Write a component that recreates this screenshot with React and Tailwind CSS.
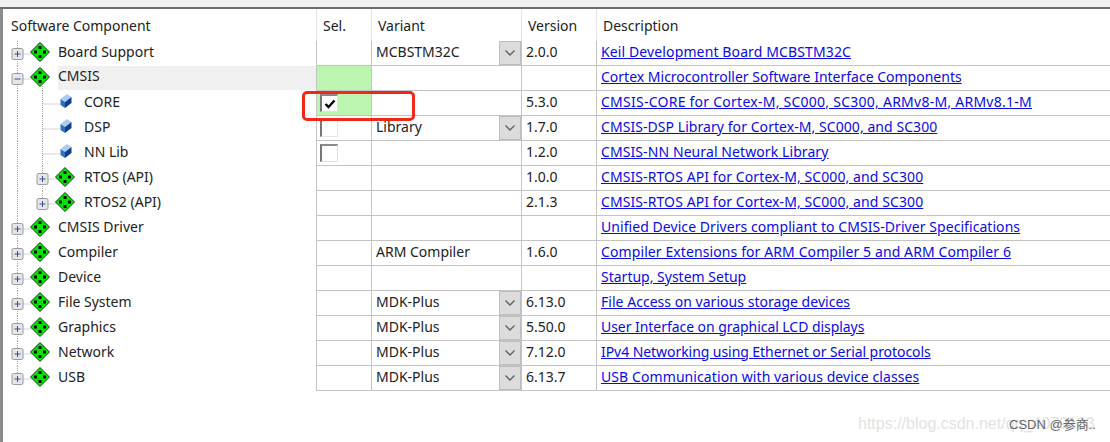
import React from 'react';

const rows = [
  { name: 'Board Support', level: 0, icon: 'pack', exp: '+', variant: 'MCBSTM32C', drop: true, version: '2.0.0', desc: 'Keil Development Board MCBSTM32C', fit: 'tracking-[0.12px]' },
  { name: 'CMSIS', level: 0, icon: 'pack', exp: '-', active: true, green: true, version: '', desc: 'Cortex Microcontroller Software Interface Components', fit: '' },
  { name: 'CORE', level: 1, icon: 'gem', green: true, check: 'on', version: '5.3.0', desc: 'CMSIS-CORE for Cortex-M, SC000, SC300, ARMv8-M, ARMv8.1-M', fit: 'tracking-[0.25px]' },
  { name: 'DSP', level: 1, icon: 'gem', check: 'faint', variant: 'Library', drop: true, version: '1.7.0', desc: 'CMSIS-DSP Library for Cortex-M, SC000, and SC300', fit: 'tracking-[0.06px]' },
  { name: 'NN Lib', level: 1, icon: 'gem', check: 'off', version: '1.2.0', desc: 'CMSIS-NN Neural Network Library', fit: 'tracking-[0.09px]' },
  { name: 'RTOS (API)', level: 1, icon: 'pack', exp: '+', version: '1.0.0', desc: 'CMSIS-RTOS API for Cortex-M, SC000, and SC300', fit: 'tracking-[0.09px]' },
  { name: 'RTOS2 (API)', level: 1, icon: 'pack', exp: '+', lastChild: true, version: '2.1.3', desc: 'CMSIS-RTOS API for Cortex-M, SC000, and SC300', fit: 'tracking-[0.09px]' },
  { name: 'CMSIS Driver', level: 0, icon: 'pack', exp: '+', version: '', desc: 'Unified Device Drivers compliant to CMSIS-Driver Specifications', fit: 'tracking-[0.06px]' },
  { name: 'Compiler', level: 0, icon: 'pack', exp: '+', variant: 'ARM Compiler', version: '1.6.0', desc: 'Compiler Extensions for ARM Compiler 5 and ARM Compiler 6', fit: 'tracking-[0.1px]' },
  { name: 'Device', level: 0, icon: 'pack', exp: '+', version: '', desc: 'Startup, System Setup', fit: '' },
  { name: 'File System', level: 0, icon: 'pack', exp: '+', variant: 'MDK-Plus', drop: true, version: '6.13.0', desc: 'File Access on various storage devices', fit: 'tracking-[0.03px]' },
  { name: 'Graphics', level: 0, icon: 'pack', exp: '+', variant: 'MDK-Plus', drop: true, version: '5.50.0', desc: 'User Interface on graphical LCD displays', fit: 'tracking-[-0.05px]' },
  { name: 'Network', level: 0, icon: 'pack', exp: '+', variant: 'MDK-Plus', drop: true, version: '7.12.0', desc: 'IPv4 Networking using Ethernet or Serial protocols', fit: 'tracking-[-0.06px]' },
  { name: 'USB', level: 0, icon: 'pack', exp: '+', last: true, variant: 'MDK-Plus', drop: true, version: '6.13.7', desc: 'USB Communication with various device classes', fit: 'tracking-[0.09px]' },
];

function Pack({ cx, cy }) {
  return (
    <g>
      <path d={`M${cx} ${cy - 9.5}L${cx + 9.5} ${cy}L${cx} ${cy + 9.5}L${cx - 9.5} ${cy}Z`} fill="#00e600" stroke="#1c3a1c" strokeWidth="1" />
      <rect x={cx - 1.5} y={cy - 6} width="3" height="3" fill="#000" />
      <rect x={cx - 1.5} y={cy + 3} width="3" height="3" fill="#000" />
      <rect x={cx - 6} y={cy - 1.5} width="3" height="3" fill="#000" />
      <rect x={cx + 3} y={cy - 1.5} width="3" height="3" fill="#000" />
    </g>
  );
}

function Gem({ cx, cy }) {
  return (
    <g>
      <path d={`M${cx - 5.5} ${cy - 2}L${cx + 1} ${cy - 7}L${cx + 5.5} ${cy - 4}L${cx - 1} ${cy + 1}Z`} fill="#a9cdf2" />
      <path d={`M${cx - 5.5} ${cy - 2}L${cx - 1} ${cy + 1}L${cx - 1} ${cy + 7}L${cx - 5.5} ${cy + 4}Z`} fill="#2f6fc4" />
      <path d={`M${cx - 1} ${cy + 1}L${cx + 5.5} ${cy - 4}L${cx + 5.5} ${cy + 2}L${cx - 1} ${cy + 7}Z`} fill="#123f8c" />
    </g>
  );
}

function Expander({ cx, cy, kind }) {
  return (
    <g>
      <rect x={cx - 5.5} y={cy - 5.5} width="11" height="11" rx="1.5" fill="#e4e6ea" stroke="#9a9a9a" />
      <path d={kind === '+' ? `M${cx - 3} ${cy}H${cx + 3}M${cx} ${cy - 3}V${cy + 3}` : `M${cx - 3} ${cy}H${cx + 3}`} stroke="#3c4f8a" strokeWidth="1" />
    </g>
  );
}

// connectors + icons for one tree row, drawn in page x coordinates
function TreeGutter({ row }) {
  const width = row.level === 0 ? 55 : 81;
  const dot = { stroke: '#a8a8a8', strokeWidth: 1, strokeDasharray: '1 1' };
  const mid = 13;
  return (
    <svg width={width} height="25" viewBox={`3 0 ${width} 25`} className="shrink-0">
      <line x1="17.5" y1="0" x2="17.5" y2={row.last ? mid : 25} {...dot} />
      {row.level === 1 && (
        <line x1="42.5" y1="0" x2="42.5" y2={row.lastChild ? mid : 25} {...dot} />
      )}
      {row.level === 0 && row.exp === '-' && <line x1="42.5" y1="20" x2="42.5" y2="25" {...dot} />}
      {row.level === 0 ? (
        <>
          <line x1="17.5" y1={mid} x2="32" y2={mid} {...dot} />
          <Expander cx={17.5} cy={mid} kind={row.exp} />
          <Pack cx={40} cy={11} />
        </>
      ) : (
        <>
          <line x1="42.5" y1={mid} x2="60" y2={mid} {...dot} />
          {row.exp && <Expander cx={42.5} cy={mid} kind={row.exp} />}
          {row.icon === 'pack' ? <Pack cx={65} cy={11} /> : <Gem cx={66} cy={10} />}
        </>
      )}
    </svg>
  );
}

function Checkbox({ state }) {
  return (
    <div
      className={`ml-[3px] mt-[3px] w-[18px] h-[18px] bg-white border-l-2 border-l-[#777] flex items-center justify-center ${
        state === 'faint'
          ? 'border-r border-b border-r-[#e6e6e6] border-b-[#e6e6e6]'
          : 'border-t-2 border-t-[#8a8a8a] border-r border-b border-r-[#e0e0e0] border-b-[#e0e0e0]'
      }`}
    >
      {state === 'on' && (
        <svg width="12" height="10" viewBox="0 0 12 10">
          <path d="M1.5 5L4.5 8L10.5 1.5" fill="none" stroke="#000" strokeWidth="2.4" />
        </svg>
      )}
    </div>
  );
}

function Row({ row }) {
  const cell = 'h-[25px] border-b border-r border-[#c4c4c4] flex items-center text-[#222]';
  return (
    <>
      <div className="h-[25px] flex items-stretch border-r border-[#c4c4c4]">
        <TreeGutter row={row} />
        <div className={`flex-1 flex items-center pb-[4px] ${row.active ? 'bg-[#f0f0f0] mb-px' : ''}`}>
          <span>{row.name}</span>
        </div>
      </div>
      <div className={`h-[25px] border-b border-r border-[#c4c4c4] ${row.green ? 'bg-[#bcf5b0]' : ''}`}>
        {row.check && <Checkbox state={row.check} />}
      </div>
      <div className={`${cell} justify-between pl-1`}>
        <span className="pb-[3px]">{row.variant}</span>
        {row.drop && (
          <div className="w-[22px] h-[24px] bg-[#dcdcdc] border border-[#bdbdbd] flex items-center justify-center">
            <svg width="12" height="8" viewBox="0 0 12 8">
              <path d="M1.5 1.5L6 6L10.5 1.5" fill="none" stroke="#606060" strokeWidth="1.4" />
            </svg>
          </div>
        )}
      </div>
      <div className={`${cell} pl-[4px] pb-[3px]`}>{row.version}</div>
      <div className="h-[25px] border-b border-[#c4c4c4] flex items-center pl-[4px] pb-[3px]">
        <a href="#" className={`text-[#0a0ae6] underline ${row.fit}`}>{row.desc}</a>
      </div>
    </>
  );
}

export default function App() {
  return (
    <div className="relative w-[1110px] h-[442px] overflow-hidden bg-white text-[14px] leading-none text-[#222] font-['Noto_Sans','Open_Sans',sans-serif]">
      <div className="h-[7px] bg-[#f0f0f0]" />
      <div className="h-[2px] bg-[#6e6e6e]" />
      <div className="h-[433px] border-l-[3px] border-[#8c8c8c]">
        <div className="grid grid-cols-[314px_55px_150px_75px_1fr]">
          <div className="h-[32px] flex items-center pl-2 pt-[2px] border-r border-[#e4e4e4]">Software Component</div>
          <div className="h-[32px] flex items-center pl-[6px] pt-[2px] border-r border-[#e4e4e4]">Sel.</div>
          <div className="h-[32px] flex items-center pl-[6px] pt-[2px] border-r border-[#e4e4e4]">Variant</div>
          <div className="h-[32px] flex items-center pl-[6px] pt-[2px] border-r border-[#e4e4e4]">Version</div>
          <div className="h-[32px] flex items-center pl-[6px] pt-[2px]">Description</div>
          {rows.map((r) => (
            <Row key={r.name} row={r} />
          ))}
        </div>
      </div>

      {/* red annotation drawn on top of the screenshot */}
      <div className="absolute left-[302px] top-[91px] w-[113px] h-[30px] border-[3px] border-[#f02818] rounded-[5px]" />

      {/* watermarks */}
      <div className="absolute left-[858px] top-[416px] text-[16px] text-[#e2e2e2] font-['Liberation_Sans',sans-serif] whitespace-nowrap">
        https://blog.csdn.net/qq_4079133
      </div>
      <div className="absolute left-[1009px] top-[418px] text-[13px] text-[#666] font-['Liberation_Sans','Noto_Sans_CJK_SC',sans-serif] whitespace-nowrap">
        CSDN @参商..
      </div>
    </div>
  );
}
